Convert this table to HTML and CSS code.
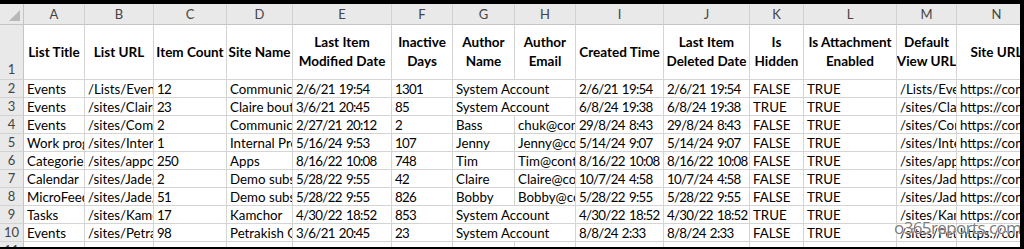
FILE: index.html
```html
<!DOCTYPE html>
<html>
<head>
<meta charset="utf-8">
<link rel="stylesheet" href="styles.css">
</head>
<body>
<div class="frame">
  <div class="sheet">
    <div class="ch corner"><span class="tri"></span></div>
    <div class="ch">A</div><div class="ch">B</div><div class="ch">C</div><div class="ch">D</div><div class="ch">E</div><div class="ch">F</div><div class="ch">G</div><div class="ch">H</div><div class="ch">I</div><div class="ch">J</div><div class="ch">K</div><div class="ch">L</div><div class="ch">M</div><div class="ch">N</div>

    <div class="rh rh1">1</div>
    <div class="hd">List Title</div><div class="hd">List URL</div><div class="hd">Item Count</div><div class="hd">Site Name</div><div class="hd">Last Item<br>Modified Date</div><div class="hd">Inactive<br>Days</div><div class="hd">Author<br>Name</div><div class="hd">Author<br>Email</div><div class="hd">Created Time</div><div class="hd">Last Item<br>Deleted Date</div><div class="hd">Is<br>Hidden</div><div class="hd">Is Attachment<br>Enabled</div><div class="hd">Default<br>View URL</div><div class="hd">Site URL</div>

    <div class="rh">2</div>
    <div class="c">Events</div><div class="c">/Lists/Events/AllItems</div><div class="c n">12</div><div class="c">Communication site</div><div class="c n">2/6/21 19:54</div><div class="c n">1301</div><div class="c span2">System Account</div><div class="c n">2/6/21 19:54</div><div class="c n">2/6/21 19:54</div><div class="c">FALSE</div><div class="c">TRUE</div><div class="c">/Lists/Events/AllItems.aspx</div><div class="c">https://contoso.sharepoint.com</div>

    <div class="rh">3</div>
    <div class="c">Events</div><div class="c">/sites/Claire/Lists/Events</div><div class="c n">23</div><div class="c">Claire boutique</div><div class="c n">3/6/21 20:45</div><div class="c n">85</div><div class="c span2">System Account</div><div class="c n">6/8/24 19:38</div><div class="c n">6/8/24 19:38</div><div class="c">TRUE</div><div class="c">TRUE</div><div class="c">/sites/Claire/Lists/Events</div><div class="c">https://contoso.sharepoint.com</div>

    <div class="rh">4</div>
    <div class="c">Events</div><div class="c">/sites/Communication/Lists</div><div class="c n">2</div><div class="c">Communication site</div><div class="c n">2/27/21 20:12</div><div class="c n">2</div><div class="c">Bass</div><div class="c">chuk@contoso.com</div><div class="c n">29/8/24 8:43</div><div class="c n">29/8/24 8:43</div><div class="c">FALSE</div><div class="c">TRUE</div><div class="c">/sites/Communication/Lists</div><div class="c">https://contoso.sharepoint.com</div>

    <div class="rh">5</div>
    <div class="c">Work progress tracker</div><div class="c">/sites/Internal/Lists</div><div class="c n">1</div><div class="c">Internal Projects</div><div class="c n">5/16/24 9:53</div><div class="c n">107</div><div class="c">Jenny</div><div class="c">Jenny@contoso.com</div><div class="c n">5/14/24 9:07</div><div class="c n">5/14/24 9:07</div><div class="c">FALSE</div><div class="c">TRUE</div><div class="c">/sites/Internal/Lists</div><div class="c">https://contoso.sharepoint.com</div>

    <div class="rh">6</div>
    <div class="c">Categories</div><div class="c">/sites/appcatalog/Lists</div><div class="c n">250</div><div class="c">Apps</div><div class="c n">8/16/22 10:08</div><div class="c n">748</div><div class="c">Tim</div><div class="c">Tim@contoso.com</div><div class="c n">8/16/22 10:08</div><div class="c n">8/16/22 10:08</div><div class="c">FALSE</div><div class="c">TRUE</div><div class="c">/sites/appcatalog/Lists</div><div class="c">https://contoso.sharepoint.com</div>

    <div class="rh">7</div>
    <div class="c">Calendar</div><div class="c">/sites/Jade/Lists/Calendar</div><div class="c n">2</div><div class="c">Demo subsite</div><div class="c n">5/28/22 9:55</div><div class="c n">42</div><div class="c">Claire</div><div class="c">Claire@contoso.com</div><div class="c n">10/7/24 4:58</div><div class="c n">10/7/24 4:58</div><div class="c">FALSE</div><div class="c">TRUE</div><div class="c">/sites/Jade/Lists/Calendar</div><div class="c">https://contoso.sharepoint.com</div>

    <div class="rh">8</div>
    <div class="c">MicroFeed</div><div class="c">/sites/Jade/Lists/MicroFeed</div><div class="c n">51</div><div class="c">Demo subsite</div><div class="c n">5/28/22 9:55</div><div class="c n">826</div><div class="c">Bobby</div><div class="c">Bobby@contoso.com</div><div class="c n">5/28/22 9:55</div><div class="c n">5/28/22 9:55</div><div class="c">FALSE</div><div class="c">TRUE</div><div class="c">/sites/Jade/Lists/MicroFeed</div><div class="c">https://contoso.sharepoint.com</div>

    <div class="rh">9</div>
    <div class="c">Tasks</div><div class="c">/sites/Kamchor/Lists/Tasks</div><div class="c n">17</div><div class="c">Kamchor</div><div class="c n">4/30/22 18:52</div><div class="c n">853</div><div class="c span2">System Account</div><div class="c n">4/30/22 18:52</div><div class="c n">4/30/22 18:52</div><div class="c">TRUE</div><div class="c">TRUE</div><div class="c">/sites/Kamchor/Lists/Tasks</div><div class="c">https://contoso.sharepoint.com</div>

    <div class="rh">10</div>
    <div class="c">Events</div><div class="c">/sites/Petrakish/Lists</div><div class="c n">98</div><div class="c">Petrakish Group</div><div class="c n">3/6/21 20:45</div><div class="c n">23</div><div class="c span2">System Account</div><div class="c n">8/8/24 2:33</div><div class="c n">8/8/24 2:33</div><div class="c">FALSE</div><div class="c">TRUE</div><div class="c">/sites/Petrakish/Lists</div><div class="c">https://contoso.sharepoint.com</div>

    <div class="rh">11</div>
    <div class="c"></div><div class="c"></div><div class="c"></div><div class="c"></div><div class="c"></div><div class="c"></div><div class="c"></div><div class="c"></div><div class="c"></div><div class="c"></div><div class="c"></div><div class="c"></div><div class="c"></div><div class="c"></div>
  </div>
  <div class="watermark">o365reports.com</div>
</div>
</body>
</html>
```

FILE: styles.css
```css
html, body {
  margin: 0;
  padding: 0;
  background: #000;
}

.frame {
  position: relative;
  width: 1020px;
  height: 243px;
  margin-top: 4px;
  background: #fff;
  overflow: hidden;
  font-family: "Lato", "Liberation Sans", sans-serif;
  font-size: 13.3px;
  color: #000;
}

.sheet {
  display: grid;
  grid-template-columns: 24px 61px 69px 73px 66px 99px 61px 62px 61px 88px 86px 54px 93px 60px 80px;
  grid-template-rows: 21px 55px repeat(10, 18px);
  width: 1036px;
}

.ch {
  background: #e9e9e9;
  border-right: 1px solid #d2d2d2;
  border-bottom: 1px solid #c4c4c4;
  box-sizing: border-box;
  display: flex;
  align-items: center;
  justify-content: center;
  font-size: 13px;
  color: #444;
}

.corner {
  position: relative;
  border-right-color: #c4c4c4;
}

.tri {
  position: absolute;
  right: 3px;
  bottom: 3px;
  width: 0;
  height: 0;
  border-left: 11px solid transparent;
  border-bottom: 11px solid #b8b8b8;
}

.rh {
  background: #e9e9e9;
  border-right: 1px solid #c4c4c4;
  border-bottom: 1px solid #d2d2d2;
  box-sizing: border-box;
  display: flex;
  align-items: flex-end;
  justify-content: center;
  font-size: 13px;
  color: #444;
  line-height: 17px;
}

.rh1 {
  padding-bottom: 1px;
}

.hd {
  border-right: 1px solid #d4d4d4;
  border-bottom: 1px solid #d4d4d4;
  box-sizing: border-box;
  display: flex;
  align-items: center;
  justify-content: center;
  text-align: center;
  font-weight: 700;
  font-size: 13.5px;
  line-height: 19px;
  white-space: nowrap;
  overflow: hidden;
}

.c {
  border-right: 1px solid #d4d4d4;
  border-bottom: 1px solid #d4d4d4;
  box-sizing: border-box;
  padding-left: 3px;
  white-space: nowrap;
  overflow: hidden;
  line-height: 18px;
}

.n {
  letter-spacing: -0.7px;
  word-spacing: 1.5px;
}

.span2 {
  grid-column: span 2;
}

.watermark {
  position: absolute;
  left: 894px;
  top: 213px;
  font-family: "Open Sans", "Liberation Sans", sans-serif;
  font-size: 17px;
  letter-spacing: -0.6px;
  line-height: 22px;
  color: rgba(95, 95, 95, 0.85);
  text-shadow: 0 0 2px #fff, 0 0 1px #fff;
}
```
